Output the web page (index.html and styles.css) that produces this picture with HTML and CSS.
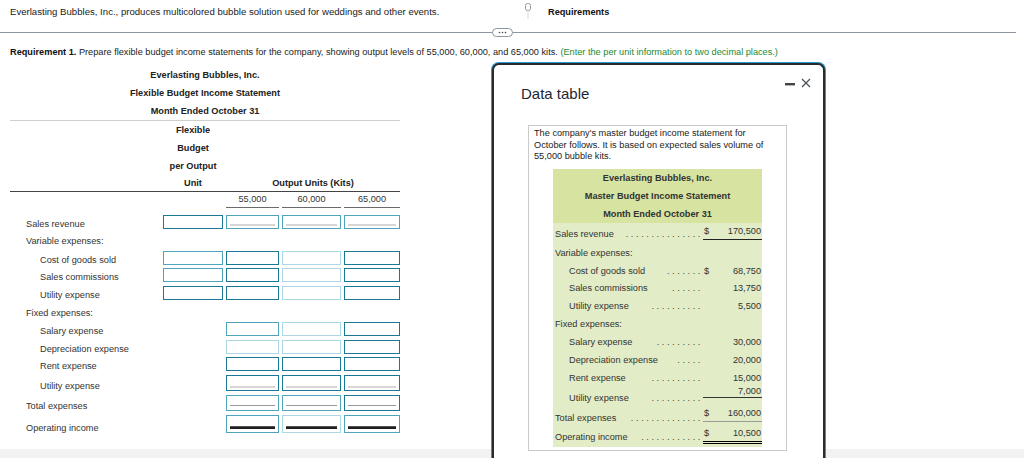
FILE: index.html
```html
<!DOCTYPE html>
<html>
<head>
<meta charset="utf-8">
<title>Flexible Budget</title>
<link rel="stylesheet" href="styles.css">
</head>
<body>
<header class="topbar">
  <p class="intro">Everlasting Bubbles, Inc., produces multicolored bubble solution used for weddings and other events.</p>
  <div class="req-tab">
    <svg class="thumb" viewBox="0 0 8 16" width="8" height="16"><line x1="4" y1="8" x2="4" y2="16" stroke="#ececec" stroke-width="2"/><rect x="1.5" y="0.5" width="5" height="7" rx="2" fill="#fff" stroke="#9a9a9a"/></svg>
    <span class="req-title">Requirements</span>
  </div>
  <svg class="more-pill" viewBox="0 0 21 9" width="21" height="9"><rect x="0.5" y="0.5" width="20" height="8" rx="4" fill="#fff" stroke="#8c96a1"/><circle cx="7.5" cy="4.5" r="0.8" fill="#3c4a5a"/><circle cx="10.5" cy="4.5" r="0.8" fill="#3c4a5a"/><circle cx="13.5" cy="4.5" r="0.8" fill="#3c4a5a"/></svg>
</header>

<p class="req1"><b>Requirement 1.</b> Prepare flexible budget income statements for the company, showing output levels of 55,000, 60,000, and 65,000 kits. <span class="hint">(Enter the per unit information to two decimal places.)</span></p>

<section class="fb">
  <div class="fb-title">Everlasting Bubbles, Inc.</div>
  <div class="fb-title">Flexible Budget Income Statement</div>
  <div class="fb-title last">Month Ended October 31</div>

  <div class="fb-grid colhead"><span></span><span class="ctr">Flexible</span></div>
  <div class="fb-grid colhead"><span></span><span class="ctr">Budget</span></div>
  <div class="fb-grid colhead"><span></span><span class="ctr">per Output</span></div>
  <div class="fb-grid colhead unit-row"><span></span><span class="ctr">Unit</span><span class="ctr span3">Output Units (Kits)</span></div>
  <div class="fb-grid nums"><span></span><span></span><span class="num">55,000</span><span class="num">60,000</span><span class="num">65,000</span></div>

  <div class="fb-grid row r-sales"><span class="lbl">Sales revenue</span><span class="box d"></span><span class="box m ul-light"></span><span class="box m ul-light"></span><span class="box m ul-light"></span></div>
  <div class="fb-grid row r-head"><span class="lbl p2">Variable expenses:</span></div>
  <div class="fb-grid row r-std"><span class="lbl ind">Cost of goods sold</span><span class="box m"></span><span class="box d"></span><span class="box l"></span><span class="box d"></span></div>
  <div class="fb-grid row r-std mt3"><span class="lbl ind">Sales commissions</span><span class="box m"></span><span class="box d"></span><span class="box l"></span><span class="box d"></span></div>
  <div class="fb-grid row r-std mt4"><span class="lbl ind">Utility expense</span><span class="box d"></span><span class="box d"></span><span class="box l"></span><span class="box d"></span></div>
  <div class="fb-grid row r-head"><span class="lbl p4">Fixed expenses:</span></div>
  <div class="fb-grid row r-std"><span class="lbl ind">Salary expense</span><span></span><span class="box m"></span><span class="box l"></span><span class="box d"></span></div>
  <div class="fb-grid row r-std mt4"><span class="lbl ind">Depreciation expense</span><span></span><span class="box l"></span><span class="box l"></span><span class="box d"></span></div>
  <div class="fb-grid row r-std mt3"><span class="lbl ind">Rent expense</span><span></span><span class="box d"></span><span class="box d"></span><span class="box d"></span></div>
  <div class="fb-grid row h16 mt4"><span class="lbl ind p5">Utility expense</span><span></span><span class="box d ul-light"></span><span class="box d ul-light"></span><span class="box d ul-light"></span></div>
  <div class="fb-grid row h16 mt4"><span class="lbl p5">Total expenses</span><span></span><span class="box m ul-gray"></span><span class="box m ul-gray"></span><span class="box d ul-gray"></span></div>
  <div class="fb-grid row h17 mt4"><span class="lbl p8">Operating income</span><span></span><span class="box m ul-dbl"></span><span class="box l ul-dbl"></span><span class="box m ul-dbl"></span></div>
</section>

<div class="footer-band"></div>

<div class="modal">
  <div class="modal-head">
    <h2 class="modal-title">Data table</h2>
    <div class="modal-tools">
      <svg viewBox="0 0 10 10" width="10" height="10"><rect x="0" y="5" width="10" height="2.4" fill="#444"/></svg>
      <svg viewBox="0 0 10 10" width="10" height="10"><path d="M1 1 L9 9 M9 1 L1 9" stroke="#4a5058" stroke-width="1.2" fill="none"/></svg>
    </div>
  </div>
  <div class="data-box">
    <p class="data-intro">The company's master budget income statement for October follows. It is based on expected sales volume of 55,000 bubble kits.</p>
    <div class="gt">
      <div class="gt-head">
        <div>Everlasting Bubbles, Inc.</div>
        <div>Master Budget Income Statement</div>
        <div>Month Ended October 31</div>
      </div>
      <div class="gr g21"><span class="gl">Sales revenue</span><span class="dots">...............</span><span class="money m-sales"><span>$</span><span>170,500</span></span></div>
      <div class="gr g18"><span class="gl">Variable expenses:</span><span></span><span></span></div>
      <div class="gr g17"><span class="gl ind">Cost of goods sold</span><span class="dots">.......</span><span class="money"><span>$</span><span>68,750</span></span></div>
      <div class="gr g18"><span class="gl ind">Sales commissions</span><span class="dots">......</span><span class="money"><span></span><span>13,750</span></span></div>
      <div class="gr g18"><span class="gl ind">Utility expense</span><span class="dots">..........</span><span class="money"><span></span><span>5,500</span></span></div>
      <div class="gr g17"><span class="gl">Fixed expenses:</span><span></span><span></span></div>
      <div class="gr g19"><span class="gl ind">Salary expense</span><span class="dots">.........</span><span class="money"><span></span><span>30,000</span></span></div>
      <div class="gr g18"><span class="gl ind">Depreciation expense</span><span class="dots">.....</span><span class="money"><span></span><span>20,000</span></span></div>
      <div class="gr g18"><span class="gl ind">Rent expense</span><span class="dots">..........</span><span class="money"><span></span><span>15,000</span></span></div>
      <div class="gr g21"><span class="gl ind">Utility expense</span><span class="dots">..........</span><span class="money m-sub"><span></span><span>7,000</span></span></div>
      <div class="gr g19"><span class="gl">Total expenses</span><span class="dots">..............</span><span class="money m-total"><span>$</span><span>160,000</span></span></div>
      <div class="gr g20"><span class="gl">Operating income</span><span class="dots">............</span><span class="money m-op"><span>$</span><span>10,500</span></span></div>
    </div>
  </div>
</div>
</body>
</html>
```

FILE: styles.css
```css
* { box-sizing: border-box; }
html, body { margin: 0; padding: 0; }
body {
  width: 1024px;
  height: 458px;
  overflow: hidden;
  position: relative;
  background: #fff;
  color: #222;
  font-family: "Liberation Sans", Arial, Helvetica, sans-serif;
  font-size: 9.2px;
}

/* top bar */
.topbar {
  position: relative;
  display: flex;
  align-items: flex-start;
  height: 33px;
  margin-right: 8px;
  border-bottom: 1px solid #8c96a1;
}
.intro {
  margin: 0;
  width: 524px;
  padding: 7px 0 0 10px;
  line-height: 10px;
  font-size: 9.6px;
}
.req-tab {
  display: flex;
  align-items: flex-start;
  gap: 16px;
  padding-top: 3px;
}
.thumb { display: block; }
.req-title {
  font-weight: bold;
  padding-top: 4px;
  line-height: 10px;
  color: #111;
}
.more-pill {
  position: absolute;
  left: 492px;
  top: 28px;
  display: block;
}

.req1 {
  margin: 13px 0 0 10px;
  line-height: 12px;
}
.req1 b { color: #111; }
.hint { color: #23892f; }

/* flexible budget table */
.fb {
  margin: 8px 0 0 10px;
  width: 390px;
}
.fb-title {
  line-height: 18px;
  text-align: center;
  font-weight: bold;
  color: #222;
}
.fb-title.last { border-bottom: 1px solid #cfcfcf; }
.fb-grid {
  display: grid;
  grid-template-columns: 150px 60px 53px 59px 56px;
  column-gap: 3px;
}
.colhead {
  line-height: 18px;
  font-weight: bold;
}
.ctr { text-align: center; }
.span3 { grid-column: 3 / 6; }
.unit-row {
  line-height: 16px;
  border-bottom: 1px solid #444;
}
.nums { height: 16px; }
.num {
  text-align: center;
  line-height: 15px;
  border-bottom: 1px solid #6a6a6a;
  color: #333;
}

.row { color: #333; }
.lbl {
  grid-column: 1;
  display: flex;
  align-items: center;
  height: 100%;
  padding-top: 4px;
  padding-left: 16px;
  white-space: nowrap;
}
.lbl.ind { padding-left: 30px; }
.lbl.p2 { padding-top: 2px; }
.lbl.p4 { padding-top: 4px; }
.lbl.p5 { padding-top: 5px; }
.lbl.p8 { padding-top: 8px; }

.r-sales { height: 14px; margin-top: 7px; }
.r-head { height: 22px; }
.r-std { height: 14px; }
.h16 { height: 16px; }
.h17 { height: 17px; }
.mt3 { margin-top: 3px; }
.mt4 { margin-top: 4px; }

.box {
  display: block;
  height: 100%;
  background-color: #fff;
  border: 1px solid #1f7d98;
}
.box.d { border-color: #1a7894; }
.box.m { border-color: #4fa3ba; }
.box.l { border-color: #add8e3; }
.ul-light {
  background: #fff linear-gradient(#d6d6d6, #d6d6d6) 3px calc(100% - 2px) / calc(100% - 6px) 2px no-repeat;
}
.ul-gray {
  background: #fff linear-gradient(#999, #999) 3px calc(100% - 4px) / calc(100% - 6px) 1px no-repeat;
}
.ul-dbl {
  background: #fff linear-gradient(#555 0, #555 1px, #1e1e1e 1px, #1e1e1e 3px) 3px calc(100% - 3px) / calc(100% - 6px) 3px no-repeat;
}

.footer-band {
  height: 12px;
  margin-top: 17px;
  background: #f2f2f2;
}

/* modal */
.modal {
  position: absolute;
  left: 492px;
  top: 63px;
  width: 333px;
  height: 395px;
  background: #fff;
  border: 2px solid #2b2b2b;
  border-bottom: none;
  border-radius: 7px 7px 0 0;
  box-shadow: 0 0 0 1px #2799d6;
}
.modal-head {
  display: flex;
  justify-content: space-between;
  align-items: flex-start;
  padding: 0 12px 0 27px;
}
.modal-title {
  margin: 20px 0 0;
  font-size: 15px;
  line-height: 18px;
  font-weight: normal;
  color: #1b2736;
}
.modal-tools {
  display: flex;
  gap: 6px;
  padding-top: 13px;
}
.modal-tools svg { display: block; }

.data-box {
  margin: 22px 0 0 34px;
  width: 259px;
  border: 1px solid #cacaca;
  padding-bottom: 3px;
}
.data-intro {
  margin: 0;
  padding: 2px 14px 0 5px;
  font-size: 9.2px;
  line-height: 11.5px;
  color: #222;
}

.gt {
  width: 209px;
  margin: 6.5px auto 0;
  background: #e2ecc6;
  color: #333;
}
.gt-head {
  background: #d6e3a1;
  text-align: center;
  font-weight: bold;
  line-height: 18px;
}
.gr {
  display: grid;
  grid-template-columns: auto 1fr 59px;
  align-items: center;
  white-space: nowrap;
}
.g17 { height: 17px; }
.g18 { height: 18px; }
.g19 { height: 19px; }
.g20 { height: 20px; }
.g21 { height: 21px; }
.gl { padding-left: 2px; }
.gl.ind { padding-left: 16px; }
.dots {
  text-align: right;
  letter-spacing: 2.6px;
  color: #444;
  overflow: hidden;
}
.money {
  display: flex;
  justify-content: space-between;
  padding: 0 1px;
  line-height: 12px;
}
.m-sales {
  align-self: start;
  margin-top: 2px;
  padding-bottom: 2px;
  border-bottom: 1px solid #222;
}
.m-sub {
  align-self: start;
  line-height: 8px;
  padding-bottom: 2px;
  border-bottom: 1px solid #333;
}
.m-total {
  align-self: start;
  line-height: 10px;
  padding-bottom: 3px;
  border-bottom: 1px solid #9a9a9a;
}
.m-op {
  align-self: start;
  margin-top: 1px;
  line-height: 10px;
  padding-bottom: 3px;
  border-bottom: 3px double #000;
}
```
